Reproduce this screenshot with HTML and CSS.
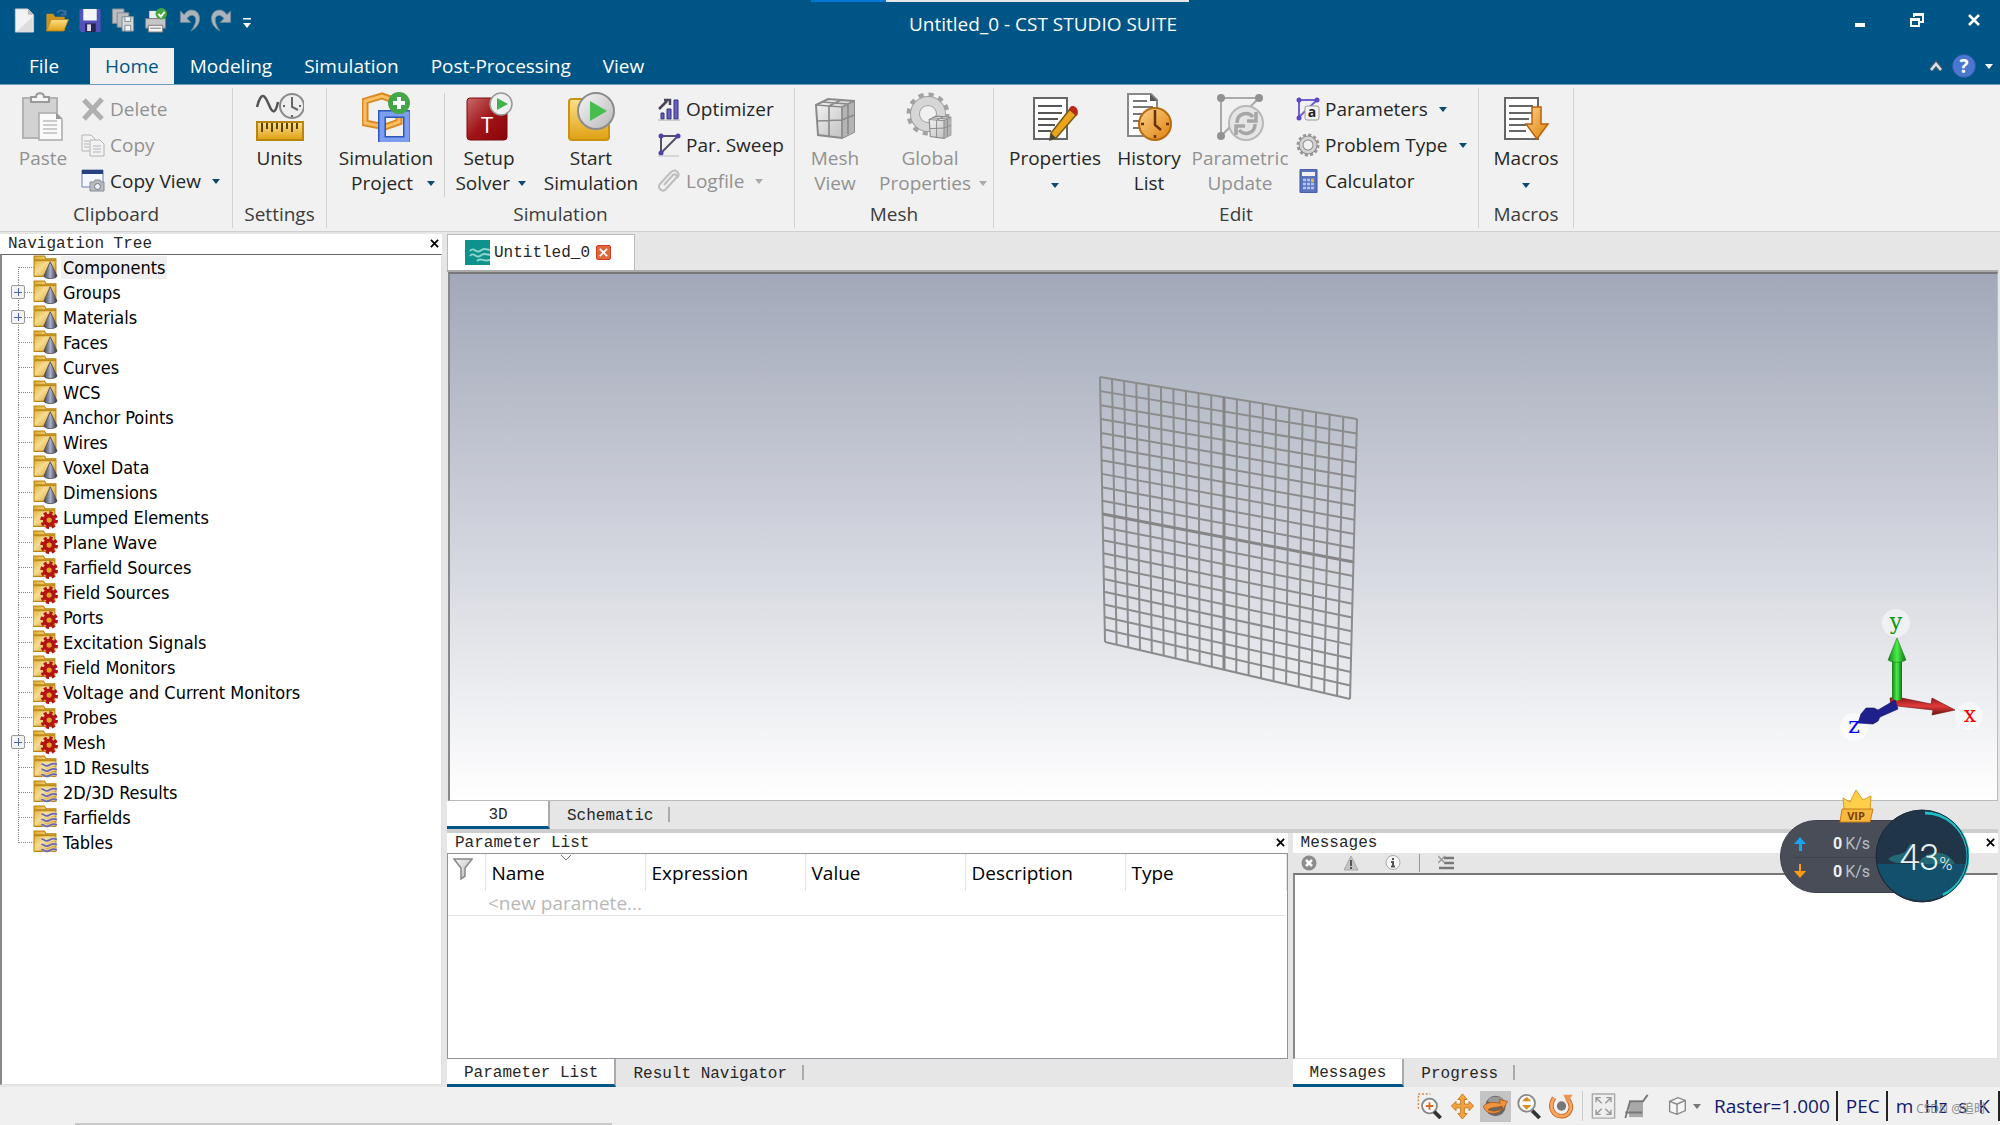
FILE: index.html
```html
<!DOCTYPE html>
<html lang="en">
<head>
    <meta charset="UTF-8">
    <meta name="viewport" content="width=device-width, initial-scale=1.0">
    <title>Untitled_0 - CST STUDIO SUITE</title>
    <link rel="stylesheet" href="styles.css">
</head>
<body>
    <!-- shared icons and gradients -->
    <svg class="defs" aria-hidden="true">
        <defs>
            <linearGradient id="gold" x1="0" y1="0" x2="0" y2="1"><stop offset="0" stop-color="#fbe08a"/><stop offset="1" stop-color="#dfa011"/></linearGradient>
            <linearGradient id="folderFill" x1="0" y1="0" x2="1" y2="1"><stop offset="0" stop-color="#d9a520"/><stop offset=".45" stop-color="#f6dc92"/><stop offset="1" stop-color="#cf9310"/></linearGradient>
            <linearGradient id="silver" x1="0" y1="0" x2="1" y2="1"><stop offset="0" stop-color="#f6f6f6"/><stop offset="1" stop-color="#b8b8b8"/></linearGradient>
            <linearGradient id="coneFill" x1="0" y1="0" x2="1" y2="0"><stop offset="0" stop-color="#444"/><stop offset=".5" stop-color="#a9afcd"/><stop offset="1" stop-color="#333"/></linearGradient>
            <linearGradient id="redFill" x1="0" y1="0" x2="1" y2="1"><stop offset="0" stop-color="#c96a6a"/><stop offset=".5" stop-color="#a01418"/><stop offset="1" stop-color="#8a0508"/></linearGradient>
            <linearGradient id="orange" x1="0" y1="0" x2="1" y2="1"><stop offset="0" stop-color="#fbd08a"/><stop offset="1" stop-color="#e0820a"/></linearGradient>
            <symbol id="folder" viewBox="0 0 24 24">
                <path d="M1 1h10l1.500 2.500h9.500v17h-21z" fill="url(#folderFill)" stroke="#b98212"/>
                <path d="M1 5h21" stroke="#c08c18" stroke-width="2"/>
            </symbol>
            <symbol id="folder-shape" viewBox="0 0 24 24">
                <use href="#folder"/>
                <path d="M16.500 6.500 10.500 20c0 3.500 12.500 3.500 12.500 0z" fill="url(#coneFill)" stroke="#4a4a4a" stroke-width=".8"/>
            </symbol>
            <symbol id="folder-gear" viewBox="0 0 24 24">
                <use href="#folder" x="-1"/>
                <circle cx="15.500" cy="14.500" r="7" fill="none" stroke="#b31217" stroke-width="3" stroke-dasharray="3 2.500"/>
                <circle cx="15.500" cy="14.500" r="4.300" fill="#e0a422" stroke="#b31217" stroke-width="3.600"/>
            </symbol>
            <symbol id="folder-waves" viewBox="0 0 24 24">
                <use href="#folder"/>
                <path d="M8 9c2-1.500 3 3 7 1s5-2 8-1M8 14c2-1.500 3 3 7 1s5-2 8-1M8 19c2-1.500 3 3 7 1s5-2 8-1" fill="none" stroke="#fff" stroke-width="3.500" opacity=".4"/>
                <path d="M8 9c2-1.500 3 3 7 1s5-2 8-1M8 14c2-1.500 3 3 7 1s5-2 8-1M8 19c2-1.500 3 3 7 1s5-2 8-1" fill="none" stroke="#6a68b4" stroke-width="1.700"/>
            </symbol>
            <symbol id="cross" viewBox="0 0 10 10">
                <path d="M1 1l8 8M9 1 1 9" stroke="currentColor" stroke-width="2" fill="none"/>
            </symbol>
            <symbol id="cube" viewBox="0 0 44 44">
                <path d="M3 8 15 2l26 2v31l-12 6L5 38z" fill="url(#silver)" stroke="#8b8b8b" stroke-width="2"/>
                <path d="M29 10l12-6v31l-12 6z" fill="#b4b4b4"/>
                <path d="M3 8l26 2 12-6M29 10v31M16 9v30M4 24l25-1 12-5M9 5l26 2v30M28 3l-12 6" fill="none" stroke="#8b8b8b" stroke-width="1.700"/>
            </symbol>
        </defs>
    </svg>

    <header class="topbar">
        <div class="progress-strip"><span class="strip-blue"></span><span class="strip-light"></span></div>
        <div class="titlebar">
            <div class="quick-access">
                <button class="qa" aria-label="New"><svg viewBox="0 0 24 26"><path d="M3 1h13l6 6v18H3z" fill="#f3f3f3" stroke="#c9c9c9"/><path d="M16 1v6h6z" fill="#bbb"/><path d="M4 25 21 9v16z" fill="#ddd"/></svg></button>
                <button class="qa" aria-label="Open"><svg viewBox="0 0 24 26"><path d="M1 6h7l2 3h10v15H1z" fill="#cb941e"/><path d="M6 12h18l-5 12H1z" fill="url(#gold)" stroke="#b98212" stroke-width=".8"/><path d="M12 5c3-4 7-3 9 1m0-4v5h-5" fill="none" stroke="#3c6f9c" stroke-width="1.800"/></svg></button>
                <button class="qa" aria-label="Save"><svg viewBox="0 0 24 26"><path d="M1 1h22v24H3l-2-2z" fill="#5451b8"/><path d="M5 1h14v12H5z" fill="#f4f4fb"/><path d="M7 16h11v9H7z" fill="#26254f"/><path d="M9 17h4v7H9z" fill="#dcdcf0"/></svg></button>
                <button class="qa" aria-label="Save all"><svg viewBox="0 0 24 26" fill="#bdbdbd" stroke="#7d8c98"><path d="M1 1h12v15H1z"/><path d="M6 5h12v15H6z"/><path d="M11 9h12v15H11z" fill="#d8d8d8"/><path d="M14 9h6v5h-6zM14 18h6v6h-6z" fill="#f2f2f2"/></svg></button>
                <button class="qa" aria-label="Print"><svg viewBox="0 0 24 26"><path d="M5 3h11v9H5z" fill="#eee"/><path d="M1 11h21v10H1z" fill="#c5c5c5" stroke="#777"/><path d="M4 18h15v7H4z" fill="#f2f2f2" stroke="#777"/><path d="M6 21h11" stroke="#777"/><circle cx="17.500" cy="6" r="6" fill="#44a83c"/><path d="M14.500 6l2.500 3 4-5" fill="none" stroke="#fff" stroke-width="2"/></svg></button>
                <button class="qa" aria-label="Undo"><svg viewBox="0 0 24 26"><path d="M3 3v12h11l-4-4c3-5 9-4 9 1 0 4-2 8-5 12 6-3 9-8 9-13C23 1 11-1 7 7z" fill="#a9b4bc" stroke="#6d8495" stroke-width=".8"/></svg></button>
                <button class="qa" aria-label="Redo"><svg viewBox="0 0 24 26"><path d="M21 3v12H10l4-4c-3-5-9-4-9 1 0 4 2 8 5 12-6-3-9-8-9-13C1 1 13-1 17 7z" fill="#a9b4bc" stroke="#6d8495" stroke-width=".8"/></svg></button>
                <button class="qa-more" aria-label="Customize"><svg viewBox="0 0 8 10"><path d="M0 0h8v1.500H0zM0 5h8L4 10z" fill="#fff"/></svg></button>
            </div>
            <h1>Untitled_0 - CST STUDIO SUITE</h1>
            <div class="window-controls">
                <button aria-label="Minimize"><svg viewBox="0 0 16 16"><path d="M3 11h10v4H3z" fill="#fff"/></svg></button>
                <button aria-label="Restore"><svg viewBox="0 0 16 16" fill="none" stroke="#fff" stroke-width="2"><path d="M5 5V2h9v8h-3M5 3h9M2 7h8v7H2zM2 8h8"/></svg></button>
                <button aria-label="Close"><svg viewBox="0 0 16 16"><path d="M3 3l10 10M13 3 3 13" stroke="#fff" stroke-width="2.500"/></svg></button>
            </div>
        </div>
        <nav class="tabs">
            <a class="tab file" href="#">File</a>
            <a class="tab active" href="#">Home</a>
            <a class="tab" href="#">Modeling</a>
            <a class="tab" href="#">Simulation</a>
            <a class="tab" href="#">Post-Processing</a>
            <a class="tab" href="#">View</a>
            <div class="help">
                <button aria-label="Collapse ribbon"><svg class="up" viewBox="0 0 14 12"><path d="M2 10l5-6 5 6" fill="none" stroke="#4f5d68" stroke-width="5"/><path d="M2 10l5-6 5 6" fill="none" stroke="#d8e2ea" stroke-width="2.500"/></svg></button>
                <button class="question" aria-label="Help">?</button>
                <button aria-label="Help menu"><i class="caret light"></i></button>
            </div>
        </nav>
    </header>

    <section class="ribbon">
        <div class="group clipboard">
            <div class="tools">
                <button class="big paste" disabled>
                    <svg viewBox="0 0 48 50"><path d="M4 6h34v40H4z" fill="#d2d2d2" stroke="#b3b3b3" stroke-width="2"/><path d="M12 10V5h5c0-5 8-5 8 0h5v5z" fill="#f4f4f4" stroke="#999" stroke-width="2"/><path d="M20 21h17l6 6v21H20z" fill="#fafafa" stroke="#aaa" stroke-width="1.500"/><path d="M37 21v6h6z" fill="#999"/><path d="M24 29h14M24 33h14M24 37h14M24 41h14" stroke="#ccc" stroke-width="2"/></svg>
                    <span>Paste</span>
                </button>
                <div class="small-tools">
                    <button disabled><svg viewBox="0 0 24 24"><path d="M3 3l18 19M21 2 3 22" stroke="#b0b0b0" stroke-width="5"/></svg>Delete</button>
                    <button disabled><svg viewBox="0 0 24 24" fill="#f2f2f2" stroke="#b4b4b4"><path d="M1 2h9l4 4v12H1z"/><path d="M9 7h10l4 4v12H9z"/><path d="M3 8h5M3 11h5M3 14h5M12 13h8M12 16h8M12 19h8"/></svg>Copy</button>
                    <button><svg viewBox="0 0 24 24"><path d="M1 1h21v17H1z" fill="#f6f8ff" stroke="#6a7fb8"/><path d="M1 1h21v4H1z" fill="#27407f"/><path d="M9 13h4l1-2h5l1 2h3v9H9z" fill="#b6bdc2" stroke="#858d93"/><circle cx="16.500" cy="17.500" r="3" fill="#eef" stroke="#777"/></svg>Copy View<i class="caret"></i></button>
                </div>
            </div>
            <h2>Clipboard</h2>
        </div>
        <div class="group settings">
            <div class="tools">
                <button class="big units">
                    <svg viewBox="0 0 48 50"><path d="M1 15C6-4 10 6 13 13s6 11 9-3" fill="none" stroke="#555" stroke-width="2.500"/><circle cx="36" cy="14" r="12" fill="#eee" stroke="#8a8a8a" stroke-width="2"/><path d="M36 5v10l6 3M27 14h2M43 14h2M36 23v2" fill="none" stroke="#666" stroke-width="2"/><path d="M1 30h46v18H1z" fill="url(#gold)" stroke="#b8860f" stroke-width="2"/><path d="M6 31v9M11 31v6M16 31v9M21 31v6M26 31v9M31 31v6M36 31v9M41 31v6" stroke="#5b430a" stroke-width="2"/></svg>
                    <span>Units</span>
                </button>
            </div>
            <h2>Settings</h2>
        </div>
        <div class="group simulation">
            <div class="tools">
                <button class="big project">
                    <svg viewBox="0 0 48 50"><path d="M3 9 20 4l17 6v20l-14 5L3 31z" fill="none" stroke="#d98a24" stroke-width="7"/><path d="M3 9 20 4l17 6v20l-14 5L3 31z" fill="none" stroke="#fbbf62" stroke-width="3"/><path d="M20 22h25v26H20z" fill="none" stroke="#2d56b8" stroke-width="8"/><path d="M20 22h25v26H20z" fill="none" stroke="#7c9df0" stroke-width="5"/><circle cx="37" cy="11" r="11" fill="#45a649"/><path d="M37 5v12M31 11h12" stroke="#fff" stroke-width="4"/></svg>
                    <span>Simulation</span><span class="drop">Project<i class="caret wide"></i></span>
                </button>
                <span class="tool-sep"></span>
                <button class="big solver">
                    <svg viewBox="0 0 48 50"><rect x="2" y="6" width="40" height="42" rx="3" fill="url(#redFill)" stroke="#7b0a0c"/><text x="22" y="41" text-anchor="middle" class="solver-letter">T</text><circle cx="36" cy="12" r="11" fill="#f0f0f0" stroke="#999" stroke-width="1.500"/><path d="M32 6l11 6-11 6z" fill="#3fb34a"/></svg>
                    <span>Setup</span><span class="drop">Solver<i class="caret"></i></span>
                </button>
                <button class="big start">
                    <svg viewBox="0 0 48 50"><rect x="2" y="7" width="40" height="41" rx="3" fill="url(#gold)" stroke="#c9920f" stroke-width="2"/><circle cx="29" cy="19" r="18" fill="url(#silver)" stroke="#8c8c8c" stroke-width="2"/><path d="M23 9l17 10-17 10z" fill="#47bd4e"/></svg>
                    <span>Start</span><span>Simulation</span>
                </button>
                <div class="small-tools">
                    <button><svg viewBox="0 0 24 24"><path d="M4 16h3v6H4zM10 12h4v10h-4zM17 3h4v19h-4z" fill="#6a5fc0" stroke="#33307f"/><path d="M2 12 10 4m-3-1h6v5" fill="none" stroke="#4a4458" stroke-width="2.500"/><path d="M1 23h22" stroke="#aaa"/></svg>Optimizer</button>
                    <button><svg viewBox="0 0 24 24"><path d="M4 20V3h17L4 20" fill="none" stroke="#555069" stroke-width="2"/><circle cx="4" cy="3" r="2.500" fill="#4f40a8"/><circle cx="21" cy="3" r="2.500" fill="#4f40a8"/><circle cx="4" cy="20" r="2.500" fill="#4f40a8"/><path d="M1 23h21" stroke="#bbb"/></svg>Par. Sweep</button>
                    <button disabled><svg viewBox="0 0 24 24"><path d="M7 16 16 6c2-2 5 1 3 3L9 20c-4 4-9-1-6-5L14 3c5-4 10 2 6 6" fill="none" stroke="#bdbdbd" stroke-width="2"/></svg>Logfile<i class="caret"></i></button>
                </div>
            </div>
            <h2>Simulation</h2>
        </div>
        <div class="group mesh">
            <div class="tools">
                <button class="big mesh-view" disabled>
                    <svg viewBox="0 0 48 50"><use href="#cube" x="1" y="5" width="46" height="44"/></svg>
                    <span>Mesh</span><span>View</span>
                </button>
                <button class="big global" disabled>
                    <svg viewBox="0 0 48 50"><circle cx="22" cy="22" r="19" fill="none" stroke="#a2a2a2" stroke-width="5" stroke-dasharray="5 4.950"/><circle cx="22" cy="22" r="13" fill="none" stroke="#a2a2a2" stroke-width="10"/><circle cx="22" cy="22" r="13" fill="none" stroke="#d6d6d6" stroke-width="8"/><use href="#cube" x="21" y="23" width="26" height="25"/></svg>
                    <span>Global</span><span class="drop">Properties<i class="caret"></i></span>
                </button>
            </div>
            <h2>Mesh</h2>
        </div>
        <div class="group edit">
            <div class="tools">
                <button class="big properties">
                    <svg viewBox="0 0 48 50"><path d="M3 6h33v41H3z" fill="#fff" stroke="#666" stroke-width="2"/><path d="M7 14h24M7 21h24M7 27h20M7 33h17M7 39h13" stroke="#555" stroke-width="2"/><path d="M39 17l6 6-20 23-6 2 1-7z" fill="#eaa51b" stroke="#775a1b" stroke-width="1.500"/><path d="M38 18c1-8 12-3 8 6z" fill="#bb2a16"/><path d="M20 41l5 5-6 2z" fill="#444"/></svg>
                    <span>Properties</span><i class="caret below"></i>
                </button>
                <button class="big history">
                    <svg viewBox="0 0 48 50"><path d="M3 2h23l6 6v36H3z" fill="#fff" stroke="#888" stroke-width="2"/><path d="M25 2v7h7" fill="#555"/><path d="M8 9h14M8 15h20M8 22h12M8 29h8M8 36h8" stroke="#777" stroke-width="2"/><circle cx="30" cy="32" r="16" fill="url(#orange)" stroke="#b56b12" stroke-width="2"/><path d="M30 21v12l6 5M30 18v3M30 43v3M16 32h3M41 32h3" fill="none" stroke="#6d3308" stroke-width="2.500"/></svg>
                    <span>History</span><span>List</span>
                </button>
                <button class="big parametric" disabled>
                    <svg viewBox="0 0 48 50"><path d="M5 44V6h38L5 44" fill="none" stroke="#a8a8a8" stroke-width="2"/><circle cx="5" cy="6" r="4" fill="#929292"/><circle cx="43" cy="6" r="4" fill="#929292"/><circle cx="5" cy="44" r="4" fill="#929292"/><circle cx="30" cy="31" r="17" fill="#e5e5e5" stroke="#b8b8b8" stroke-width="2"/><path d="M21 31c0-10 11-12 16-6m3-5v9h-9M39 32c0 10-11 12-16 6m-3 5v-9h9" fill="none" stroke="#a6a6a6" stroke-width="3.500"/></svg>
                    <span>Parametric</span><span>Update</span>
                </button>
                <div class="small-tools">
                    <button><svg viewBox="0 0 24 24"><path d="M3 20V3h18L3 20" fill="none" stroke="#6f60cc" stroke-width="2"/><circle cx="3" cy="3" r="2.500" fill="#5b46c8"/><circle cx="21" cy="3" r="2.500" fill="#5b46c8"/><circle cx="3" cy="21" r="2.500" fill="#5b46c8"/><rect x="9" y="9" width="14" height="14" rx="2" fill="#f3f3f3" stroke="#999"/><text x="16" y="20" text-anchor="middle" class="param-letter">a</text></svg>Parameters<i class="caret"></i></button>
                    <button><svg viewBox="0 0 24 24"><circle cx="12" cy="12" r="10" fill="none" stroke="#999" stroke-width="3" stroke-dasharray="3 2.230"/><circle cx="12" cy="12" r="7" fill="none" stroke="#8d8d8d" stroke-width="5"/><circle cx="12" cy="12" r="7" fill="none" stroke="#d2d2d2" stroke-width="3"/></svg>Problem Type<i class="caret"></i></button>
                    <button><svg viewBox="0 0 24 24"><rect x="4" y="0" width="17" height="24" rx="1" fill="#5a74bd" stroke="#3d539b"/><path d="M6 3h13v4H6z" fill="#f2f2f2"/><path d="M7 11h11M7 15h11M7 19h11" stroke="#b5c4ef" stroke-width="2.500" stroke-dasharray="3 1"/><path d="M15 10h3v3h-3z" fill="#f0b23c"/></svg>Calculator</button>
                </div>
            </div>
            <h2>Edit</h2>
        </div>
        <div class="group macros">
            <div class="tools">
                <button class="big macro">
                    <svg viewBox="0 0 48 50"><path d="M3 6h33v41H3z" fill="#fff" stroke="#666" stroke-width="2"/><path d="M7 14h24M7 21h24M7 27h20M7 33h17M7 39h17" stroke="#666" stroke-width="2"/><path d="M30 15h9v17h7L35 47 24 32h6z" fill="url(#orange)" stroke="#b8620c" stroke-width="1.500"/></svg>
                    <span>Macros</span><i class="caret below"></i>
                </button>
            </div>
            <h2>Macros</h2>
        </div>
    </section>

    <main class="workspace">
        <aside class="nav-panel">
            <div class="panel-title">Navigation Tree<button class="close" aria-label="Close"><svg><use href="#cross"/></svg></button></div>
            <ul class="tree">
                <li><svg><use href="#folder-shape"/></svg><a class="selected" href="#">Components</a></li>
                <li><button class="expand" aria-label="Expand"></button><svg><use href="#folder-shape"/></svg><a href="#">Groups</a></li>
                <li><button class="expand" aria-label="Expand"></button><svg><use href="#folder-shape"/></svg><a href="#">Materials</a></li>
                <li><svg><use href="#folder-shape"/></svg><a href="#">Faces</a></li>
                <li><svg><use href="#folder-shape"/></svg><a href="#">Curves</a></li>
                <li><svg><use href="#folder-shape"/></svg><a href="#">WCS</a></li>
                <li><svg><use href="#folder-shape"/></svg><a href="#">Anchor Points</a></li>
                <li><svg><use href="#folder-shape"/></svg><a href="#">Wires</a></li>
                <li><svg><use href="#folder-shape"/></svg><a href="#">Voxel Data</a></li>
                <li><svg><use href="#folder-shape"/></svg><a href="#">Dimensions</a></li>
                <li><svg><use href="#folder-gear"/></svg><a href="#">Lumped Elements</a></li>
                <li><svg><use href="#folder-gear"/></svg><a href="#">Plane Wave</a></li>
                <li><svg><use href="#folder-gear"/></svg><a href="#">Farfield Sources</a></li>
                <li><svg><use href="#folder-gear"/></svg><a href="#">Field Sources</a></li>
                <li><svg><use href="#folder-gear"/></svg><a href="#">Ports</a></li>
                <li><svg><use href="#folder-gear"/></svg><a href="#">Excitation Signals</a></li>
                <li><svg><use href="#folder-gear"/></svg><a href="#">Field Monitors</a></li>
                <li><svg><use href="#folder-gear"/></svg><a href="#">Voltage and Current Monitors</a></li>
                <li><svg><use href="#folder-gear"/></svg><a href="#">Probes</a></li>
                <li><button class="expand" aria-label="Expand"></button><svg><use href="#folder-gear"/></svg><a href="#">Mesh</a></li>
                <li><svg><use href="#folder-waves"/></svg><a href="#">1D Results</a></li>
                <li><svg><use href="#folder-waves"/></svg><a href="#">2D/3D Results</a></li>
                <li><svg><use href="#folder-waves"/></svg><a href="#">Farfields</a></li>
                <li><svg><use href="#folder-waves"/></svg><a href="#">Tables</a></li>
            </ul>
        </aside>

        <div class="content">
            <div class="doc-tabs">
                <div class="doc-tab">
                    <svg class="doc-icon" viewBox="0 0 25 25"><path d="M0 0h25v25H0z" fill="#0d938b"/><path d="M5 11c4-5 6 3 10 0s5-2 10-1M5 16c4-5 6 3 10 0s5-2 10-1M12 21c4-4 6 1 13-1" fill="none" stroke="#8fd6cf" stroke-width="2"/></svg>
                    <span>Untitled_0</span>
                    <button class="doc-close" aria-label="Close document"><svg><use href="#cross"/></svg></button>
                </div>
            </div>

            <div class="viewport">
                <svg id="grid" class="grid" viewBox="0 0 280 340"></svg>
                <svg class="triad" viewBox="0 0 150 140">
                    <defs>
                        <linearGradient id="shaftY" x1="0" y1="0" x2="1" y2="0"><stop offset="0" stop-color="#1a7d1a"/><stop offset=".5" stop-color="#48f048"/><stop offset="1" stop-color="#156b15"/></linearGradient>
                        <linearGradient id="shaftX" x1="0" y1="0" x2="0" y2="1"><stop offset="0" stop-color="#8a1515"/><stop offset=".5" stop-color="#e23b3b"/><stop offset="1" stop-color="#6e0e0e"/></linearGradient>
                    </defs>
                    <circle cx="57" cy="16" r="14" fill="#fff" opacity=".5"/>
                    <circle cx="130" cy="109" r="14" fill="#fff" opacity=".5"/>
                    <circle cx="15" cy="120" r="14" fill="#fff" opacity=".6"/>
                    <path d="M51 91l7-1 34 7 1-6 23 12-23 5 1-5-36-4-6 3z" fill="url(#shaftX)" stroke="#6e0e0e" stroke-width=".6"/>
                    <path d="M53 53h10v39c-3 2-7 2-10 0z" fill="url(#shaftY)"/>
                    <path d="M58 31l9 22c-5 3-13 3-18 0z" fill="url(#shaftY)" stroke="#1a7d1a" stroke-width=".6"/>
                    <path d="M56 93l3 9-18 8-2 4-5 3-15-1 3-9 5-6 8 0 4 2z" fill="#20208c" stroke="#111163" stroke-width=".6"/>
                    <text x="57" y="22" fill="#0a960a">y</text>
                    <text x="131" y="115" fill="#f00">x</text>
                    <text x="15" y="126" fill="#00f">z</text>
                </svg>
            </div>

            <div class="bottom-tabs view-tabs">
                <button class="btab active">3D</button><button class="btab">Schematic</button>
            </div>

            <div class="docks">
                <section class="dock params">
                    <div class="panel-title">Parameter List<button class="close" aria-label="Close"><svg><use href="#cross"/></svg></button></div>
                    <div class="dock-body">
                        <table>
                            <thead>
                                <tr>
                                    <th class="filter"><svg viewBox="0 0 20 22"><path d="M1 1h18l-7 9v8l-4 3V10z" fill="url(#silver)" stroke="#888" stroke-width="1.500"/></svg></th>
                                    <th>Name<svg class="sort" viewBox="0 0 12 6"><path d="M1 0l5 5 5-5" fill="none" stroke="#777"/></svg></th>
                                    <th>Expression</th>
                                    <th>Value</th>
                                    <th>Description</th>
                                    <th>Type</th>
                                </tr>
                            </thead>
                            <tbody>
                                <tr><td></td><td class="placeholder">&lt;new paramete...</td><td></td><td></td><td></td><td></td></tr>
                            </tbody>
                        </table>
                    </div>
                    <div class="bottom-tabs">
                        <button class="btab active">Parameter List</button><button class="btab">Result Navigator</button>
                    </div>
                </section>

                <section class="dock messages">
                    <div class="panel-title">Messages<button class="close" aria-label="Close"><svg><use href="#cross"/></svg></button></div>
                    <div class="msg-tools">
                        <button aria-label="Errors"><svg viewBox="0 0 16 16"><circle cx="8" cy="8" r="7.500" fill="#8c8c8c"/><path d="M5 5l6 6M11 5l-6 6" stroke="#fff" stroke-width="2.500"/></svg></button>
                        <button aria-label="Warnings"><svg viewBox="0 0 16 16"><path d="M8 1l7 14H1z" fill="#c4c4c4" stroke="#aaa"/><path d="M8 5v6M8 12v2" stroke="#555" stroke-width="2"/></svg></button>
                        <button aria-label="Info"><svg viewBox="0 0 16 16"><circle cx="8" cy="7.500" r="7" fill="#f6f6f6" stroke="#aaa"/><path d="M8 3v2M6 7h2v4M6 11.500h4" fill="none" stroke="#555" stroke-width="2"/></svg></button>
                        <span class="msg-sep"></span>
                        <button aria-label="Clear list"><svg viewBox="0 0 16 16"><path d="M6 3h10M6 8h10M1 13h15" stroke="#777" stroke-width="2.500"/><path d="M0 1l7 7M7 1 0 8" stroke="#999" stroke-width="1.500"/></svg></button>
                    </div>
                    <div class="dock-body"></div>
                    <div class="bottom-tabs">
                        <button class="btab active">Messages</button><button class="btab">Progress</button>
                    </div>
                </section>
            </div>
        </div>
    </main>

    <footer class="status">
        <button aria-label="Zoom window"><svg viewBox="0 0 26 28"><path d="M1 17V1h13" fill="none" stroke="#d9813a" stroke-width="1.500" stroke-dasharray="2 2"/><circle cx="13" cy="14" r="8" fill="#fff" stroke="#888" stroke-width="2"/><path d="M9 14h8M13 10v8" stroke="#d9691d" stroke-width="2"/><path d="M18 20l7 7" stroke="#333" stroke-width="4"/></svg></button>
        <button aria-label="Pan"><svg viewBox="0 0 26 28"><path d="M13 1l5 6h-3v5h5V9l5 5-5 5v-3h-5v6h3l-5 6-5-6h3v-6H6v3l-5-5 5-5v3h5V7H8z" fill="#f3a440" stroke="#c57718"/></svg></button>
        <button class="on" aria-label="Rotate"><svg viewBox="0 0 26 28"><circle cx="13" cy="14" r="11" fill="#666"/><ellipse cx="13" cy="8" rx="8" ry="4" fill="#999"/><path d="M0 14c5-5 12-4 18-3l-1-4 9 2-5 9-1-4c-5 2-12 1-15 4 5 3 12 1 15-1-2 6-18 8-20-3z" fill="#ee9340" stroke="#a45512" stroke-width=".8"/></svg></button>
        <button aria-label="Zoom"><svg viewBox="0 0 26 28"><circle cx="11" cy="11" r="9" fill="#fff" stroke="#888" stroke-width="2"/><path d="M11 4l5 5H6zM11 18l5-5H6z" fill="#e08a1c"/><path d="M17 19l8 8" stroke="#333" stroke-width="4"/></svg></button>
        <button aria-label="Rotate in plane"><svg viewBox="0 0 26 28"><circle cx="13" cy="14" r="5" fill="#777"/><path d="M5 5C-2 16 5 25 13 25s14-9 7-18" fill="none" stroke="#c9641c" stroke-width="5"/><path d="M5 5C-2 16 5 25 13 25s14-9 7-18" fill="none" stroke="#f5a866" stroke-width="3"/><path d="M15 2h10l-6 9z" fill="#ee9450"/></svg></button>
        <span class="light-sep"></span>
        <button aria-label="Fit"><svg viewBox="0 0 26 28"><path d="M1 1h24v26H1z" fill="#eee" stroke="#aaa" stroke-width="1.500"/><path d="M5 10V5h5M5 5l6 6M16 5h5v5M21 5l-6 6M5 18v5h5M5 23l6-6M16 23h5v-5M21 23l-6-6" fill="none" stroke="#999" stroke-width="1.500"/></svg></button>
        <button aria-label="Working plane"><svg viewBox="0 0 26 28"><path d="M5 8h15v18H5z" fill="#a8a8a8"/><path d="M1 27 6 9h14L25 2M1 21h18" fill="none" stroke="#777" stroke-width="2"/></svg></button>
        <button class="view-cube" aria-label="View"><svg viewBox="0 0 26 28"><path d="M5 9l9-4 8 3v11l-9 4-8-3zM5 9l8 3 9-4M13 12v11" fill="#f6f6f6" stroke="#888" stroke-width="1.500"/></svg><i class="caret grey"></i></button>
        <span class="cell">Raster=1.000</span>
        <span class="cell">PEC</span>
        <span class="cell units-cell"><span>m</span><span>Hz</span><span>s</span><span>K</span><small class="mark">CSDN @追时</small></span>
    </footer>
    <div class="hscroll"><span></span></div>

    <div class="speed">
        <svg class="crown" viewBox="0 0 36 36"><path d="M5 20 4 9l7 4 6-12 7 10 8-4-1 15z" fill="#ffcf4a" stroke="#d99a22"/><path d="M3 20h31l-3 13H1z" fill="#f7b93c" stroke="#c87f18"/><text x="17" y="31" text-anchor="middle">VIP</text></svg>
        <div class="rates">
            <div><svg viewBox="0 0 12 14"><path d="M6 0l6 7H8v7H5V7H0z" fill="#1aa3f0"/></svg><b>0</b><span>K/s</span></div>
            <div><svg viewBox="0 0 12 14"><path d="M6 14 0 7h5V0h2v7h5z" fill="#ff9b12"/></svg><b>0</b><span>K/s</span></div>
        </div>
        <div class="gauge">
            <svg viewBox="0 0 94 94"><circle cx="47" cy="47" r="46" fill="#203648"/><path d="M2 55h90a46 46 0 0 1-90 0z" fill="#12506c"/><path d="M13 50c5-5 14-4 18-8 2-5 4-6 5-8 0 11-4 18-11 20-6 0-9-2-12-4zM43 55c5-12 28-18 37 0z" fill="#236873"/><path d="M50 4a43 43 0 0 1 18 82" fill="none" stroke="#20bcc4" stroke-width="3"/><circle cx="47" cy="47" r="46" fill="none" stroke="#182938" stroke-width="1"/></svg>
            <div class="percent">43<small>%</small></div>
        </div>
    </div>

    <script src="script.js"></script>
</body>
</html>
```
FILE: styles.css
```css
* {
    box-sizing: border-box;
}
body {
    margin: 0;
    min-height: 100vh;
    display: flex;
    flex-direction: column;
    position: relative;
    background-color: #e6e6e6;
    color: #262626;
    font-family: "Open Sans", "Noto Sans", sans-serif;
    font-size: 19px;
}
button {
    margin: 0;
    padding: 0;
    border: none;
    background: none;
    color: inherit;
    font: inherit;
}
a {
    color: inherit;
    text-decoration: none;
}
h1, h2 {
    margin: 0;
    font-size: 19px;
    font-weight: normal;
}
svg {
    display: block;
    flex: none;
}
.defs {
    position: absolute;
    width: 0;
    height: 0;
}

/* title bar */
.topbar {
    background-color: #005587;
    color: #fff;
    border-bottom: 1px solid #6f9dbb;
}
.progress-strip {
    display: flex;
    height: 2px;
    padding-left: 811px;
}
.strip-blue {
    width: 75px;
    background-color: #0078d7;
}
.strip-light {
    width: 303px;
    background-color: #e6e6e6;
}
.titlebar {
    display: flex;
    height: 46px;
}
.titlebar h1 {
    flex: 1;
    text-align: center;
    line-height: 44px;
}
.quick-access {
    display: flex;
    align-items: flex-start;
    gap: 9px;
    width: 250px;
    padding: 6px 0 0 12px;
}
.qa svg {
    width: 24px;
    height: 25px;
}
.qa-more {
    padding-top: 10px;
}
.qa-more svg {
    width: 8px;
    height: 10px;
}
.window-controls {
    display: flex;
    align-items: flex-start;
    gap: 41px;
    width: 164px;
    padding: 10px 0 0 16px;
}
.window-controls svg {
    width: 16px;
    height: 16px;
}
.tabs {
    display: flex;
    height: 36px;
    line-height: 37px;
}
.tab {
    padding: 0 16px;
}
.tab.file {
    padding: 0 31px 0 29px;
}
.tab.active {
    padding: 0 15px;
    background-color: #f1f1f1;
    color: #005587;
}
.help {
    display: flex;
    align-items: center;
    gap: 9px;
    margin-left: auto;
    padding-right: 7px;
}
.up {
    width: 14px;
    height: 12px;
}
.question {
    width: 24px;
    height: 24px;
    border-radius: 50%;
    background-color: #4a78d0;
    border: 1px solid #2f58a8;
    font-weight: bold;
    line-height: 22px;
}
.caret {
    display: block;
    flex: none;
    border: 4px solid transparent;
    border-top: 5px solid #0c4a70;
    border-bottom: none;
}
.caret.light {
    border-top-color: #fff;
}
.caret.grey {
    border-top-color: #777;
}

/* ribbon */
.ribbon {
    display: flex;
    height: 147px;
    background-color: #f1f1f1;
    border-bottom: 1px solid #cfcfcf;
}
.group {
    display: flex;
    flex-direction: column;
    justify-content: space-between;
    margin: 3px 0;
    padding-top: 3px;
    border-right: 1px solid #d2d2d2;
}
.group h2 {
    line-height: 26px;
    text-align: center;
    color: #3c3c3c;
    margin-bottom: 1px;
}
.tools {
    display: flex;
    height: 108px;
}
.clipboard {
    width: 233px;
    padding-left: 10px;
}
.clipboard h2 {
    margin-left: -10px;
}
.settings {
    width: 94px;
}
.simulation {
    width: 468px;
}
.mesh {
    width: 199px;
}
.edit {
    width: 485px;
}
.macros {
    width: 95px;
}
.simulation .tools {
    padding-left: 4px;
}
.mesh .tools {
    padding-left: 6px;
}
.edit .tools {
    padding-left: 7px;
}
.big {
    display: flex;
    flex-direction: column;
    align-items: center;
    padding-top: 1px;
    line-height: 25px;
}
.big > svg {
    width: 48px;
    height: 50px;
    margin-bottom: 4px;
}
.big:disabled, .small-tools button:disabled {
    color: #929292;
}
button:disabled .caret {
    border-top-color: #aaa;
}
.paste {
    width: 66px;
}
.units, .macro {
    width: 94px;
}
.project {
    width: 110px;
}
.solver {
    width: 82px;
}
.start, .global {
    width: 122px;
}
.mesh-view {
    width: 68px;
}
.properties {
    width: 108px;
}
.history {
    width: 80px;
}
.parametric {
    width: 102px;
}
.drop {
    display: flex;
    align-items: center;
    align-self: flex-end;
    gap: 8px;
    padding-right: 4px;
}
.project .drop {
    padding-right: 6px;
}
.drop .wide {
    margin-left: 6px;
}
.below {
    margin-top: 12px;
}
.tool-sep {
    width: 1px;
    margin: 2px 3px;
    background-color: #cfcfcf;
}
.small-tools button {
    display: flex;
    align-items: center;
    height: 36px;
    padding-left: 5px;
    gap: 5px;
    white-space: nowrap;
}
.small-tools svg {
    width: 24px;
    height: 24px;
}
.small-tools .caret {
    margin-left: 6px;
}
.solver-letter {
    font-size: 22px;
    fill: #fff;
}
.param-letter {
    font-size: 14px;
    font-weight: bold;
    fill: #222;
}

/* workspace */
.workspace {
    flex: 1;
    display: flex;
    gap: 5px;
    padding: 2px 2px 0 0;
}
.panel-title {
    display: flex;
    align-items: center;
    justify-content: space-between;
    height: 20px;
    padding: 0 3px 0 8px;
    background-color: #fff;
    font-family: "Liberation Mono", monospace;
    font-size: 16px;
    line-height: 20px;
}
.close svg {
    width: 9px;
    height: 9px;
    margin-bottom: 2px;
    color: #000;
}
.nav-panel {
    width: 442px;
    display: flex;
    flex-direction: column;
    margin-bottom: 2px;
}
.tree {
    flex: 1;
    margin: 0;
    padding: 0 0 0 9px;
    list-style: none;
    background-color: #fff;
    border: 1px solid #e0e0e0;
    border-left: 2px solid #888;
    border-top: 1px solid #666;
    color: #000;
    font-family: "DejaVu Sans Condensed", "DejaVu Sans", sans-serif;
    font-stretch: condensed;
    font-size: 18px;
}
.tree li {
    display: flex;
    align-items: center;
    position: relative;
    height: 25px;
    padding-left: 22px;
}
.tree li > svg {
    width: 25px;
    height: 25px;
}
.tree a {
    margin-left: 3px;
    padding: 0 2px;
    line-height: 23px;
}
.tree .selected {
    background-color: #f0f0f0;
}
.tree li::before {
    content: "";
    position: absolute;
    left: 7px;
    top: 0;
    width: 1px;
    height: 25px;
    border-left: 1px dotted #888;
}
.tree li:first-child::before {
    top: 12px;
    height: 13px;
}
.tree li:last-child::before {
    height: 13px;
}
.tree li::after {
    content: "";
    position: absolute;
    left: 8px;
    top: 12px;
    width: 15px;
    border-top: 1px dotted #888;
}
.expand {
    position: absolute;
    z-index: 1;
    left: 0;
    top: 5px;
    width: 14px;
    height: 14px;
    border: 1px solid #999;
    border-radius: 2px;
    background: linear-gradient(#4a66a8, #4a66a8) center / 8px 1px no-repeat, linear-gradient(#4a66a8, #4a66a8) center / 1px 8px no-repeat, #f3f3f3;
}

/* document area */
.content {
    flex: 1;
    min-width: 0;
    display: flex;
    flex-direction: column;
}
.doc-tabs {
    height: 38px;
    border-bottom: 2px solid #aaa;
}
.doc-tab {
    display: flex;
    align-items: center;
    width: 188px;
    height: 36px;
    padding-left: 17px;
    background-color: #fff;
    border: 1px solid #bbb;
    border-bottom: none;
    font-family: "Liberation Mono", monospace;
    font-size: 16px;
}
.doc-icon {
    width: 25px;
    height: 25px;
    margin-right: 4px;
}
.doc-close {
    width: 15px;
    height: 15px;
    margin-left: 6px;
    padding: 2px;
    border: 1px solid #c8401c;
    border-radius: 2px;
    background-color: #e0683c;
    color: #fff;
}
.doc-close svg {
    width: 9px;
    height: 9px;
}
.viewport {
    flex: 1;
    position: relative;
    display: flex;
    align-items: center;
    justify-content: center;
    margin-left: 1px;
    border: 1px solid #bbb;
    border-left: 2px solid #888;
    border-top: 2px solid #777;
    background: linear-gradient(#a2a8b9, #fff);
}
.grid {
    width: 280px;
    height: 340px;
    fill: none;
    stroke: #8c8c8c;
    stroke-width: 2;
}
.grid .axis {
    stroke: #858585;
    stroke-width: 3;
}
.triad {
    position: absolute;
    right: 8px;
    bottom: 53px;
    width: 150px;
    height: 140px;
    font-family: "DejaVu Serif", serif;
    font-size: 22px;
    text-anchor: middle;
}
.bottom-tabs {
    display: flex;
    height: 28px;
    font-family: "Liberation Mono", monospace;
    font-size: 16px;
}
.btab {
    position: relative;
    padding: 2px 17px 0;
}
.btab.active {
    padding-right: 16px;
    background-color: #fff;
    border-right: 2px solid #aaa;
    border-bottom: 3px solid #005587;
}
.btab:not(.active)::after {
    content: "";
    position: absolute;
    right: 0;
    top: 6px;
    width: 2px;
    height: 15px;
    background-color: #aaa;
}
.view-tabs .active {
    width: 103px;
}
.docks {
    display: flex;
    gap: 5px;
    height: 258px;
    border-top: 4px solid #cdcdcd;
}
.dock {
    display: flex;
    flex-direction: column;
    min-width: 0;
}
.params {
    flex: 840;
}
.messages {
    flex: 705;
}
.dock-body {
    flex: 1;
    background-color: #fff;
    border: 1px solid #8e959c;
}
.messages .dock-body {
    border: 1px solid #e0e0e0;
    border-left: 2px solid #888;
    border-top: 2px solid #777;
}
.params table {
    width: 100%;
    border-collapse: collapse;
    table-layout: fixed;
    color: #000;
}
.params th, .params td {
    padding: 0 6px;
    font-weight: normal;
    text-align: left;
    white-space: nowrap;
}
.params th {
    position: relative;
    width: 160px;
    height: 37px;
    border-right: 1px solid #e3e3e3;
}
.params th:last-child {
    width: auto;
}
.params th.filter {
    width: 37px;
    padding: 0 0 8px 5px;
}
.filter svg {
    width: 20px;
    height: 22px;
}
.sort {
    position: absolute;
    left: 74px;
    top: 1px;
    width: 12px;
    height: 6px;
}
.params td {
    height: 24px;
    line-height: 22px;
    border-bottom: 1px solid #e3e3e3;
}
.params td.placeholder {
    padding: 0 0 0 3px;
    color: #b8b8b8;
}
.msg-tools {
    display: flex;
    align-items: center;
    gap: 26px;
    height: 20px;
    padding-left: 8px;
}
.msg-tools svg {
    width: 16px;
    height: 16px;
}
.msg-sep {
    width: 1px;
    height: 18px;
    margin: 0 -8px;
    background-color: #999;
}

/* status bar */
.status {
    display: flex;
    align-items: center;
    justify-content: flex-end;
    gap: 2px;
    height: 36px;
    padding-top: 2px;
    background-color: #f0f0f0;
    color: #10186e;
}
.status button {
    display: flex;
    align-items: center;
    justify-content: center;
    width: 31px;
    height: 31px;
}
.status svg {
    width: 25px;
    height: 26px;
}
.status button.on {
    background-color: #c4c4c4;
}
.light-sep {
    width: 1px;
    height: 30px;
    margin: 0 3px;
    background-color: #ccc;
}
.status .view-cube {
    width: 46px;
    margin-left: 6px;
    gap: 4px;
}
.status .view-cube svg {
    width: 24px;
}
.cell {
    padding: 0 6px;
    line-height: 30px;
    border-right: 2px solid #222;
}
.units-cell {
    display: flex;
    position: relative;
    gap: 11px;
    padding-right: 8px;
}
.mark {
    position: absolute;
    right: 12px;
    top: 3px;
    font-family: "Open Sans", "Noto Sans CJK SC", sans-serif;
    font-size: 12px;
    color: #8a8a8a;
    white-space: nowrap;
}
.hscroll {
    height: 2px;
    padding-left: 75px;
    background-color: #f0f0f0;
}
.hscroll span {
    display: block;
    width: 537px;
    height: 2px;
    background-color: #c8c8c8;
}

/* floating network speed widget */
.speed {
    position: absolute;
    right: 31px;
    bottom: 222px;
    display: flex;
    align-items: center;
}
.rates {
    width: 136px;
    height: 73px;
    margin-right: -41px;
    padding-left: 13px;
    border-radius: 36px 0 0 36px;
    background-color: #484d58;
    border: 1px solid #3c414b;
    color: #b9bdc6;
    font-family: Roboto, sans-serif;
    font-size: 16px;
}
.rates div {
    display: flex;
    align-items: center;
    height: 36px;
    padding-top: 10px;
}
.rates div + div {
    padding: 0 0 8px;
    border-top: 1px solid #3c414b;
}
.rates svg {
    width: 12px;
    height: 14px;
}
.rates b {
    margin: 0 3px 0 27px;
    color: #f0f0f0;
}
.gauge {
    position: relative;
    width: 94px;
    height: 94px;
}
.percent {
    position: absolute;
    inset: 0;
    padding-left: 8px;
    line-height: 98px;
    text-align: center;
    color: #e8f2f4;
    font-family: Roboto, sans-serif;
    font-size: 36px;
    font-weight: 300;
}
.percent small {
    font-size: 18px;
}
.crown {
    position: absolute;
    left: 59px;
    top: -20px;
    width: 36px;
    height: 36px;
    font-family: "Open Sans", sans-serif;
    font-size: 11px;
    font-weight: bold;
    fill: #7a3c08;
}
```
FILE: script.js
```js
// corners and edge midpoints of the tilted working plane
var plane = {
    top: [[16, 10], [140, 30], [273, 52]],
    bottom: [[21, 275], [140, 303], [266, 332]],
    left: [[16, 10], [19, 147], [21, 275]],
    right: [[273, 52], [270, 195], [266, 332]]
};

// perspective-correct point at t along an edge, axis is 0 for x and 1 for y
function along(edge, t, axis) {
    var a = edge[0], m = edge[1], b = edge[2];
    var w = (m[axis] - a[axis]) / (b[axis] - m[axis]);
    var d = (1 - t) + w * t;
    return [0, 1].map(function(i) {
        return (a[i] * (1 - t) + w * b[i] * t) / d;
    });
}

function addLine(p, q, isAxis) {
    var line = document.createElementNS("http://www.w3.org/2000/svg", "line");
    line.setAttribute("x1", p[0]);
    line.setAttribute("y1", p[1]);
    line.setAttribute("x2", q[0]);
    line.setAttribute("y2", q[1]);
    if (isAxis) {
        line.setAttribute("class", "axis");
    }
    document.getElementById("grid").appendChild(line);
}

for (var i = 0; i <= 20; i++) {
    var t = i / 20;
    addLine(along(plane.top, t, 0), along(plane.bottom, t, 0), i === 10);
    addLine(along(plane.left, t, 1), along(plane.right, t, 1), i === 10);
}
```
